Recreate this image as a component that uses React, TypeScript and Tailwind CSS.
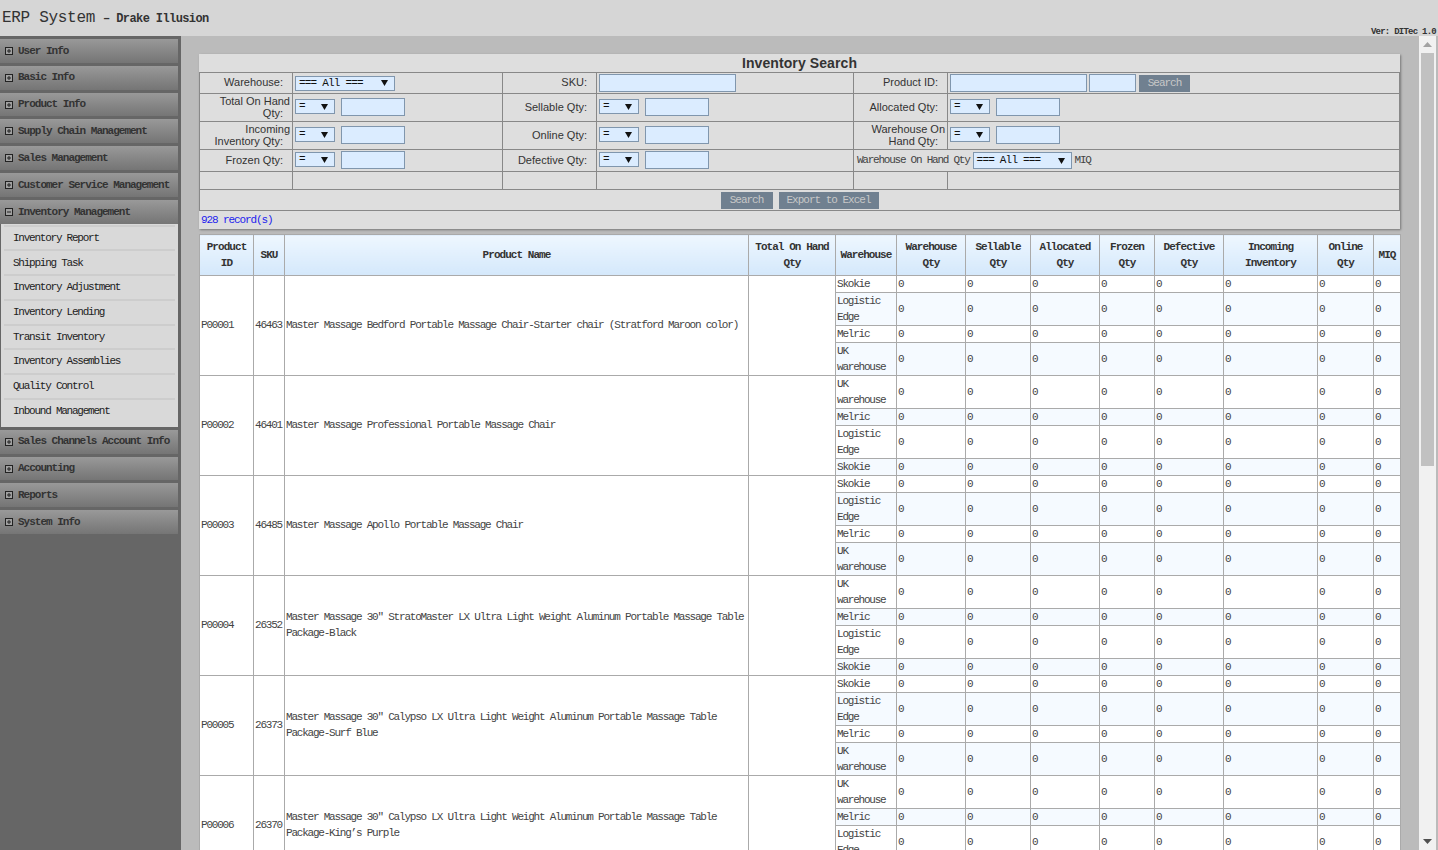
import React from 'react';

const menuTop = ['User Info', 'Basic Info', 'Product Info', 'Supply Chain Management', 'Sales Management', 'Customer Service Management'];
const menuSub = ['Inventory Report', 'Shipping Task', 'Inventory Adjustment', 'Inventory Lending', 'Transit Inventory', 'Inventory Assemblies', 'Quality Control', 'Inbound Management'];
const menuBottom = ['Sales Channels Account Info', 'Accounting', 'Reports', 'System Info'];

const colWidths = [54, 31, 464, 87, 61, 69, 65, 69, 55, 69, 94, 56, 27];
const headers = ['Product ID', 'SKU', 'Product Name', 'Total On Hand Qty', 'Warehouse', 'Warehouse Qty', 'Sellable Qty', 'Allocated Qty', 'Frozen Qty', 'Defective Qty', 'Incoming Inventory', 'Online Qty', 'MIQ'];

const orderA = ['Skokie', 'Logistic Edge', 'Melric', 'UK warehouse'];
const orderB = ['UK warehouse', 'Melric', 'Logistic Edge', 'Skokie'];

const products = [
  { id: 'P00001', sku: '46463', name: 'Master Massage Bedford Portable Massage Chair-Starter chair (Stratford Maroon color)', wh: orderA },
  { id: 'P00002', sku: '46401', name: 'Master Massage Professional Portable Massage Chair', wh: orderB },
  { id: 'P00003', sku: '46485', name: 'Master Massage Apollo Portable Massage Chair', wh: orderA },
  { id: 'P00004', sku: '26352', name: 'Master Massage 30″ StratoMaster LX Ultra Light Weight Aluminum Portable Massage Table Package-Black', wh: orderB },
  { id: 'P00005', sku: '26373', name: 'Master Massage 30″ Calypso LX Ultra Light Weight Aluminum Portable Massage Table Package-Surf Blue', wh: orderA },
  { id: 'P00006', sku: '26370', name: 'Master Massage 30″ Calypso LX Ultra Light Weight Aluminum Portable Massage Table Package-King’s Purple', wh: orderB },
];

const mono = "font-['Liberation_Mono',monospace]";

const Toggle = ({ open }: { open?: boolean }) => (
  <svg width="8" height="8" viewBox="0 0 8 8" className="shrink-0">
    <rect x="0.5" y="0.5" width="7" height="7" fill="#a0a0a0" stroke="#222" />
    {open ? <path d="M2 4h4" stroke="#222" /> : <path d="M2 4h4M4 2v4" stroke="#222" />}
  </svg>
);

const MenuItem = ({ label, open, flush }: { label: string; open?: boolean; flush?: boolean }) => (
  <div className={`h-[23.83px] flex items-center gap-[5px] pl-[5px] bg-gradient-to-b from-[#999999] to-[#757575] ${flush ? '' : 'mb-[3px]'}`}>
    <Toggle open={open} />
    <span className={`${mono} text-[11px] font-bold tracking-[-1px] text-[#333] whitespace-nowrap`}>{label}</span>
  </div>
);

const Sidebar = () => (
  <aside className="w-[181px] shrink-0 bg-[#666] pt-[3px] pr-[3px]">
    {menuTop.map((m) => <MenuItem key={m} label={m} />)}
    <MenuItem label="Inventory Management" open flush />
    <div className="ml-px bg-[#d9d9d9] h-[203px] mb-[3px] px-[3px] pt-px">
      {menuSub.map((m) => (
        <div key={m} className="h-[24.7px] border-t-2 border-[#cdcdcd] flex items-center pl-[9px]">
          <span className={`${mono} text-[11px] tracking-[-1.24px] text-[#222] whitespace-nowrap`}>{m}</span>
        </div>
      ))}
    </div>
    {menuBottom.map((m) => <MenuItem key={m} label={m} />)}
  </aside>
);

const Select = ({ label, w, h = 'h-[15px]' }: { label: string; w: string; h?: string }) => (
  <span className={`${w} ${h} flex items-center justify-between border border-[#8096ad] bg-[#dbecff] pl-[3px] pr-[6px] shrink-0`}>
    <span className={`${mono} text-[11px] tracking-[-0.8px] text-[#111] whitespace-nowrap`}>{label}</span>
    <svg width="7" height="6" viewBox="0 0 7 6"><path d="M0 0h7L3.5 6z" fill="#111" /></svg>
  </span>
);

const Input = ({ w }: { w: string }) => (
  <span className={`${w} h-[18px] block border border-[#8096ad] bg-[#dbecff] shrink-0`} />
);

const Label = ({ children }: { children: React.ReactNode }) => (
  <td className="border border-[#888] text-right px-[2px] pb-[2px] leading-[12px] align-middle font-['Liberation_Sans',sans-serif] text-[11px] text-[#333]">
    {children}
  </td>
);

const QtyField = () => (
  <td className="border border-[#888] px-[2px] pb-[2px]">
    <div className="flex items-center gap-[6px]">
      <Select label="=" w="w-[40px]" />
      <Input w="w-[64px]" />
    </div>
  </td>
);

const Btn = ({ children, w }: { children: React.ReactNode; w: string }) => (
  <span className={`${w} h-[17px] flex items-center justify-center bg-[#708090] ${mono} text-[11px] tracking-[-1px] text-[#c8c8c8] whitespace-nowrap`}>
    {children}
  </span>
);

const SearchForm = () => (
  <div className="w-[1201px] bg-[#dedede] shadow-[1px_1px_2px_#777]">
    <div className="h-[18px] flex items-center justify-center font-['Liberation_Sans',sans-serif] text-[14px] font-bold tracking-[0.1px] text-[#333] pt-px">Inventory Search</div>
    <table className="w-full table-fixed border-collapse">
      <colgroup>
        <col className="w-[93px]" />
        <col className="w-[210px]" />
        <col className="w-[94px]" />
        <col className="w-[257px]" />
        <col className="w-[94px]" />
        <col />
      </colgroup>
      <tbody>
        <tr className="h-[21px]">
          <Label><span className="pr-[7px]">Warehouse:</span></Label>
          <td className="border border-[#888] px-[2px]"><Select label="=== All ===" w="w-[100px]" /></td>
          <Label><span className="pr-[7px]">SKU:</span></Label>
          <td className="border border-[#888] px-[2px]"><Input w="w-[137px]" /></td>
          <Label><span className="pr-[7px]">Product ID:</span></Label>
          <td className="border border-[#888] px-[2px]">
            <div className="flex items-center gap-[2px]">
              <Input w="w-[137px]" />
              <Input w="w-[47px]" />
              <span className="ml-px mt-px"><Btn w="w-[51px]">Search</Btn></span>
            </div>
          </td>
        </tr>
        <tr className="h-[28px]">
          <Label>Total On Hand <span className="pr-[7px]">Qty:</span></Label>
          <QtyField />
          <Label><span className="pr-[7px]">Sellable Qty:</span></Label>
          <QtyField />
          <Label><span className="pr-[7px]">Allocated Qty:</span></Label>
          <QtyField />
        </tr>
        <tr className="h-[28px]">
          <Label>Incoming <span className="pr-[7px]">Inventory Qty:</span></Label>
          <QtyField />
          <Label><span className="pr-[7px]">Online Qty:</span></Label>
          <QtyField />
          <Label>Warehouse On <span className="pr-[7px]">Hand Qty:</span></Label>
          <QtyField />
        </tr>
        <tr className="h-[22px]">
          <Label><span className="pr-[7px]">Frozen Qty:</span></Label>
          <QtyField />
          <Label><span className="pr-[7px]">Defective Qty:</span></Label>
          <QtyField />
          <td className="border border-[#888] px-[2px]" colSpan={2}>
            <div className={`flex items-center gap-[2px] ${mono} text-[11px] tracking-[-1.24px] text-[#444]`}>
              <span className="whitespace-nowrap pl-px pr-px">Warehouse On Hand Qty</span>
              <Select label="=== All ===" w="w-[99px]" h="h-[17px]" />
              <span className="ml-px">MIQ</span>
            </div>
          </td>
        </tr>
        <tr className="h-[18px]">
          <td className="border border-[#888]" />
          <td className="border border-[#888]" />
          <td className="border border-[#888]" />
          <td className="border border-[#888]" />
          <td className="border border-[#888]" />
          <td className="border border-[#888]" />
        </tr>
        <tr className="h-[21px]">
          <td colSpan={6} className="border border-[#888] pt-px">
            <div className="flex justify-center gap-[6px]">
              <Btn w="w-[52px]">Search</Btn>
              <Btn w="w-[100px]">Export to Excel</Btn>
            </div>
          </td>
        </tr>
      </tbody>
    </table>
    <div className={`h-[18px] flex items-center pl-[2px] ${mono} text-[11px] tracking-[-1.1px] text-[#2222ee]`}>928 record(s)</div>
  </div>
);

const Cell = ({ children, rowSpan, className = '' }: { children?: React.ReactNode; rowSpan?: number; className?: string }) => (
  <td rowSpan={rowSpan} className={`border border-[#aaa] pl-px align-middle ${className}`}>{children}</td>
);

const ResultsTable = () => {
  let stripe = 0;
  return (
    <table className={`w-[1201px] mt-[5px] table-fixed border-collapse bg-white ${mono} text-[11px] tracking-[-1.22px] leading-[16px] text-[#444]`}>
      <colgroup>
        {colWidths.map((w, i) => <col key={i} style={{ width: w }} />)}
      </colgroup>
      <thead>
        <tr className="h-[41px]">
          {headers.map((h) => (
            <th key={h} className="border border-[#aaa] bg-gradient-to-b from-[#eef7ff] to-[#d4e8fb] font-bold text-center px-[4px] text-[#333] tracking-[-0.95px]">
              {h}
            </th>
          ))}
        </tr>
      </thead>
      <tbody>
        {products.map((p) =>
          p.wh.map((w, i) => {
            const bg = stripe++ % 2 === 0 ? 'bg-white' : 'bg-[#f5faff]';
            const tall = w.includes(' ');
            return (
              <tr key={p.id + w} className={tall ? 'h-[33px]' : 'h-[17px]'}>
                {i === 0 && (
                  <>
                    <Cell rowSpan={4} className="bg-white pb-[2px]">{p.id}</Cell>
                    <Cell rowSpan={4} className="bg-white pb-[2px]">{p.sku}</Cell>
                    <Cell rowSpan={4} className="bg-white pb-[2px]">{p.name}</Cell>
                    <Cell rowSpan={4} className="bg-white" />
                  </>
                )}
                <Cell className={bg}>{w}</Cell>
                {Array.from({ length: 8 }).map((_, j) => <Cell key={j} className={bg}>0</Cell>)}
              </tr>
            );
          })
        )}
      </tbody>
    </table>
  );
};

const Scrollbar = () => (
  <div className="w-[17px] mr-[2px] h-full shrink-0 bg-[#f1f1f1] flex flex-col items-center">
    <div className="h-[17px] flex items-center justify-center">
      <svg width="9" height="5" viewBox="0 0 9 5"><path d="M0 5h9L4.5 0z" fill="#a3a3a3" /></svg>
    </div>
    <div className="w-[13px] h-[413px] bg-[#c1c1c1]" />
    <div className="flex-1" />
    <div className="h-[17px] flex items-center justify-center">
      <svg width="9" height="5" viewBox="0 0 9 5"><path d="M0 0h9L4.5 5z" fill="#505050" /></svg>
    </div>
  </div>
);

export default function App() {
  return (
    <div className="w-[1438px] h-[850px] overflow-hidden flex flex-col bg-[#bbb]">
      <header className="h-[36px] shrink-0 bg-[#d6d6d6] flex items-start justify-between">
        <div className="flex items-baseline pl-[2px] pt-[6px] whitespace-nowrap">
          <span className={`${mono} text-[16px] tracking-[-0.3px] text-[#333]`}>ERP System</span>
          <span className={`${mono} text-[12px] font-bold text-[#333] ml-[8px] tracking-[-0.6px]`}>– Drake Illusion</span>
        </div>
        <span className={`${mono} text-[9px] font-bold text-[#333] mt-[26px] mr-[2px] tracking-[-0.75px] whitespace-nowrap`}>Ver: DITec 1.0</span>
      </header>
      <div className="flex-1 flex min-h-0">
        <Sidebar />
        <main className="flex-1 min-w-0 flex overflow-hidden">
          <div className="w-[1238px] shrink-0 pl-[18px] pt-[18px] overflow-hidden">
            <SearchForm />
            <ResultsTable />
          </div>
          <Scrollbar />
        </main>
      </div>
    </div>
  );
}
